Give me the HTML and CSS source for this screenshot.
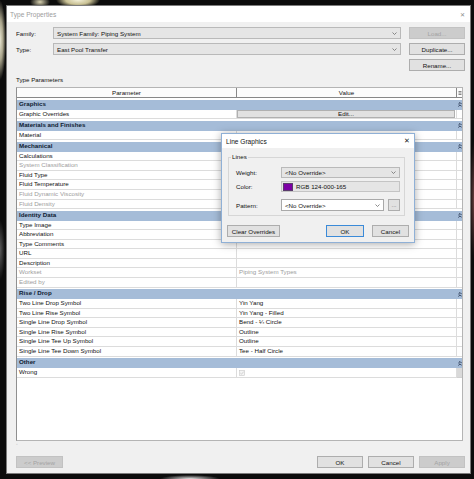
FILE: index.html
```html
<!DOCTYPE html>
<html>
<head>
<meta charset="utf-8">
<link rel="stylesheet" href="styles.css">
</head>
<body>
<div class="screen">
  <div class="window">
    <div class="titlebar"><span>Type Properties</span><span class="close">✕</span></div>
    <div class="content">
      <div class="top-grid">
        <span class="lbl">Family:</span>
        <div class="combo"><span>System Family: Piping System</span><svg class="chev" width="5" height="3" viewBox="0 0 5 3"><polyline points="0.5,0.5 2.5,2.5 4.5,0.5" fill="none" stroke="#6d6d6d" stroke-width="0.8"/></svg></div>
        <div class="btn side disabled">Load...</div>
        <span class="lbl">Type:</span>
        <div class="combo"><span>East Pool Transfer</span><svg class="chev" width="5" height="3" viewBox="0 0 5 3"><polyline points="0.5,0.5 2.5,2.5 4.5,0.5" fill="none" stroke="#6d6d6d" stroke-width="0.8"/></svg></div>
        <div class="btn side">Duplicate...</div>
        <span></span><span></span>
        <div class="btn side">Rename...</div>
      </div>
      <div class="section-label">Type Parameters</div>
      <div class="table">
        <div class="thead">
          <div class="th">Parameter</div>
          <div class="th">Value</div>
          <div class="th icon"><svg width="4" height="6" viewBox="0 0 4 6"><path d="M0.5 1.5h3M0.5 3h3M0.5 4.5h3" stroke="#555" stroke-width="0.7"/></svg></div>
        </div>
        <div class="tbody">
          <div class="row group first"><div class="gname">Graphics</div><div class="gicon"><svg width="4" height="5" viewBox="0 0 4 5"><path d="M0.4 2.1L2 0.5L3.6 2.1M0.4 4.4L2 2.8L3.6 4.4" fill="none" stroke="#1d2b45" stroke-width="0.9"/></svg></div></div>
          <div class="row"><div>Graphic Overrides</div><div class="val"><div class="editbtn">Edit...</div></div><div></div></div>

          <div class="row group"><div class="gname">Materials and Finishes</div><div class="gicon"><svg width="4" height="5" viewBox="0 0 4 5"><path d="M0.4 2.1L2 0.5L3.6 2.1M0.4 4.4L2 2.8L3.6 4.4" fill="none" stroke="#1d2b45" stroke-width="0.9"/></svg></div></div>
          <div class="row"><div>Material</div><div></div><div></div></div>

          <div class="row group"><div class="gname">Mechanical</div><div class="gicon"><svg width="4" height="5" viewBox="0 0 4 5"><path d="M0.4 2.1L2 0.5L3.6 2.1M0.4 4.4L2 2.8L3.6 4.4" fill="none" stroke="#1d2b45" stroke-width="0.9"/></svg></div></div>
          <div class="row"><div>Calculations</div><div></div><div></div></div>
          <div class="row ro"><div>System Classification</div><div></div><div></div></div>
          <div class="row"><div>Fluid Type</div><div></div><div></div></div>
          <div class="row"><div>Fluid Temperature</div><div></div><div></div></div>
          <div class="row ro"><div>Fluid Dynamic Viscosity</div><div></div><div></div></div>
          <div class="row ro"><div>Fluid Density</div><div></div><div></div></div>

          <div class="row group"><div class="gname">Identity Data</div><div class="gicon"><svg width="4" height="5" viewBox="0 0 4 5"><path d="M0.4 2.1L2 0.5L3.6 2.1M0.4 4.4L2 2.8L3.6 4.4" fill="none" stroke="#1d2b45" stroke-width="0.9"/></svg></div></div>
          <div class="row"><div>Type Image</div><div></div><div></div></div>
          <div class="row"><div>Abbreviation</div><div></div><div></div></div>
          <div class="row"><div>Type Comments</div><div></div><div></div></div>
          <div class="row"><div>URL</div><div></div><div></div></div>
          <div class="row"><div>Description</div><div></div><div></div></div>
          <div class="row ro"><div>Workset</div><div>Piping System Types</div><div></div></div>
          <div class="row ro"><div>Edited by</div><div></div><div></div></div>

          <div class="row group"><div class="gname">Rise / Drop</div><div class="gicon"><svg width="4" height="5" viewBox="0 0 4 5"><path d="M0.4 2.1L2 0.5L3.6 2.1M0.4 4.4L2 2.8L3.6 4.4" fill="none" stroke="#1d2b45" stroke-width="0.9"/></svg></div></div>
          <div class="row"><div>Two Line Drop Symbol</div><div>Yin Yang</div><div></div></div>
          <div class="row"><div>Two Line Rise Symbol</div><div>Yin Yang - Filled</div><div></div></div>
          <div class="row"><div>Single Line Drop Symbol</div><div>Bend - ¼ Circle</div><div></div></div>
          <div class="row"><div>Single Line Rise Symbol</div><div>Outline</div><div></div></div>
          <div class="row"><div>Single Line Tee Up Symbol</div><div>Outline</div><div></div></div>
          <div class="row"><div>Single Line Tee Down Symbol</div><div>Tee - Half Circle</div><div></div></div>

          <div class="row group"><div class="gname">Other</div><div class="gicon"><svg width="4" height="5" viewBox="0 0 4 5"><path d="M0.4 2.1L2 0.5L3.6 2.1M0.4 4.4L2 2.8L3.6 4.4" fill="none" stroke="#1d2b45" stroke-width="0.9"/></svg></div></div>
          <div class="row"><div>Wrong</div><div class="val"><svg class="check" width="6" height="6" viewBox="0 0 6 6"><rect x="0.5" y="0.5" width="5" height="5" fill="#f4f4f4" stroke="#c8c8c8" stroke-width="0.6"/><path d="M1.3 3L2.5 4.2L4.7 1.6" fill="none" stroke="#c4c4c4" stroke-width="0.7"/></svg></div><div class="scrollbox"></div></div>
        </div>
      </div>
      <div class="grip">◦</div>
      <div class="footer">
        <div class="btn disabled wide">&lt;&lt; Preview</div>
        <div class="spacer"></div>
        <div class="btn wide">OK</div>
        <div class="btn wide">Cancel</div>
        <div class="btn disabled wide">Apply</div>
      </div>
    </div>
  </div>

  <div class="dialog">
    <div class="dlg-title"><span>Line Graphics</span><span class="dlg-close">✕</span></div>
    <div class="dlg-body">
      <fieldset class="lines">
        <legend>Lines</legend>
        <div class="lg-grid">
          <span class="lbl r1">Weight:</span>
          <div class="combo r1"><span>&lt;No Override&gt;</span><svg class="chev" width="5" height="3" viewBox="0 0 5 3"><polyline points="0.5,0.5 2.5,2.5 4.5,0.5" fill="none" stroke="#6d6d6d" stroke-width="0.8"/></svg></div>
          <span class="lbl r2">Color:</span>
          <div class="field r2"><span class="swatch"></span><span>RGB 124-000-165</span></div>
          <span class="lbl r3">Pattern:</span>
          <div class="pattern r3">
            <div class="combo white"><span>&lt;No Override&gt;</span><svg class="chev" width="5" height="3" viewBox="0 0 5 3"><polyline points="0.5,0.5 2.5,2.5 4.5,0.5" fill="none" stroke="#6d6d6d" stroke-width="0.8"/></svg></div>
            <div class="btn dots">...</div>
          </div>
        </div>
      </fieldset>
      <div class="dlg-buttons">
        <div class="btn clear">Clear Overrides</div>
        <div class="spacer"></div>
        <div class="btn ok">OK</div>
        <div class="btn cancel">Cancel</div>
      </div>
    </div>
  </div>
</div>
</body>
</html>
```

FILE: styles.css
```css
* { box-sizing: border-box; }
html, body { margin: 0; padding: 0; }
body {
  width: 474px;
  height: 479px;
  overflow: hidden;
  font-family: "Liberation Sans", Arial, sans-serif;
  font-size: 6.2px;
  color: #111;
  background:
    radial-gradient(ellipse 22px 8px at 78px 0px, #f3f0d8 0%, #c9c194 55%, rgba(0,0,0,0) 100%),
    radial-gradient(ellipse 10px 6px at 40px 2px, #d8d2b0 0%, rgba(0,0,0,0) 100%),
    radial-gradient(ellipse 6px 40px at 0px 40px, #e9e6d2 0%, #a8a38a 50%, rgba(0,0,0,0) 100%),
    radial-gradient(ellipse 5px 30px at 0px 250px, #5a5a5a 0%, rgba(0,0,0,0) 100%),
    radial-gradient(ellipse 30px 4px at 190px 479px, #e8e8e8 0%, rgba(0,0,0,0) 100%),
    radial-gradient(ellipse 4px 60px at 474px 200px, #6a4040 0%, rgba(0,0,0,0) 100%),
    #0c0c0c;
}
.screen {
  position: relative;
  width: 474px;
  height: 479px;
  padding: 5px 3px 5px 6px;
}
.window {
  width: 465px;
  height: 469px;
  border: 1px solid #7c7c7c;
  background: #f0f0f0;
  display: flex;
  flex-direction: column;
}
.titlebar {
  height: 16px;
  flex: none;
  background: #fff;
  display: flex;
  align-items: center;
  justify-content: space-between;
  padding: 0 5px 0 3px;
  color: #9c9c9c;
  font-size: 6.6px;
}
.close { color: #8a8a8a; font-size: 6px; }
.content {
  flex: 1;
  padding: 5px 5px 5px 9px;
  display: flex;
  flex-direction: column;
}
.top-grid {
  display: grid;
  grid-template-columns: 37px 348px 64px;
  grid-template-rows: repeat(3, 12px);
  row-gap: 4px;
}
.btn.side { margin-left: 8px; }
.lbl { align-self: center; white-space: nowrap; }
.combo {
  border: 1px solid #b9b9b9;
  background: #e5e5e5;
  display: flex;
  align-items: center;
  justify-content: space-between;
  padding: 0 3px 0 3px;
  white-space: nowrap;
}
.combo.white { background: #fff; border-color: #a9a9a9; }
.chev { flex: none; }
.btn {
  border: 1px solid #adadad;
  background: #e1e1e1;
  display: flex;
  align-items: center;
  justify-content: center;
  white-space: nowrap;
}
.btn.disabled { background: #cccccc; border-color: #c2c2c2; color: #a3a3a3; }
.section-label {
  height: 12px;
  line-height: 12px;
  margin-top: 3px;
}
.table {
  margin-top: 1px;
  width: 447px;
  height: 354px;
  flex: none;
  background: #fff;
  border: 1px solid #b4b4b4;
  border-left-color: #8f8f8f;
  display: flex;
  flex-direction: column;
}
.thead {
  display: grid;
  grid-template-columns: 220px 220px 5px;
  height: 10px;
  flex: none;
}
.th {
  border-right: 1px solid #888;
  border-bottom: 1px solid #888;
  display: flex;
  align-items: center;
  justify-content: center;
  background: #fcfcfc;
}
.th.icon { border-right: none; }
.tbody { padding-top: 2px; }
.row {
  display: grid;
  grid-template-columns: 220px 220px 5px;
  height: 9.6px;
}
.row > div {
  border-bottom: 1px solid #dcdcdc;
  border-right: 1px solid #dcdcdc;
  padding-left: 2px;
  line-height: 8.6px;
  white-space: nowrap;
  overflow: hidden;
}
.row > div:last-child { border-right: none; }
.row.ro > div { color: #9d9d9d; }
.row.group {
  grid-template-columns: 440px 5px;
  background: #a5bcd8;
  margin-top: 1.8px;
}
.row.group.first { margin-top: 0; }
.row.group > div { border: none; }
.gname { font-weight: bold; color: #0e1a30; }
.gicon { display: flex; align-items: center; justify-content: center; padding-left: 0 !important; }
.row > .val { padding: 0.5px 1px 0 0; }
.editbtn {
  height: 8px;
  border: 1px solid #b0b0b0;
  background: #e1e1e1;
  display: flex;
  align-items: center;
  justify-content: center;
  line-height: 6px;
}
.check { display: block; margin: 1px 0 0 2px; }
.row > .scrollbox { background: #d9d9d9; border-bottom: 1px solid #d0d0d0; }
.grip { height: 15px; color: #b0b0b0; font-size: 5px; line-height: 6px; }
.footer {
  display: flex;
  height: 12px;
  gap: 5px;
}
.footer .btn.wide { width: 46px; }
.footer .btn.wide:first-child { width: 47px; }
.spacer { flex: 1; }

/* dialog */
.dialog {
  position: absolute;
  left: 221px;
  top: 133px;
  width: 194px;
  height: 110px;
  border: 1px solid #8fb0d6;
  background: #f0f0f0;
  box-shadow: 0 1px 8px rgba(0,0,0,0.35);
  display: flex;
  flex-direction: column;
}
.dlg-title {
  height: 14px;
  flex: none;
  background: #fff;
  display: flex;
  align-items: center;
  justify-content: space-between;
  padding: 0 4px 0 4px;
  font-size: 6.6px;
}
.dlg-close { font-size: 7px; color: #222; }
.dlg-body { padding: 5px 9px 0 6px; }
.lines {
  margin: 0;
  padding: 6px 4px 4px 7px;
  border: 1px solid #d6d6d6;
  min-width: 0;
}
.lines legend {
  padding: 0 1px;
  margin-left: -5px;
  line-height: 8px;
  font-size: 6.2px;
}
.lg-grid {
  display: grid;
  grid-template-columns: 45px 119px;
  grid-template-rows: auto auto auto;
  align-items: start;
}
.lg-grid .lbl { align-self: start; display: flex; align-items: center; }
.lg-grid .r1 { height: 11px; }
.lg-grid .r2 { height: 11px; margin-top: 3px; }
.lg-grid .r3 { height: 12px; margin-top: 7px; }
.field {
  border: 1px solid #c4c4c4;
  background: #e5e5e5;
  display: flex;
  align-items: center;
  padding-left: 1px;
  gap: 3px;
}
.swatch { width: 10px; height: 8px; background: rgb(124,0,165); border: 1px solid #5a3c6c; }
.pattern { display: flex; gap: 4px; }
.pattern .combo { flex: 1; }
.btn.dots { width: 12px; flex: none; color: #777; line-height: 4px; align-items: flex-end; padding-bottom: 3px; }
.dlg-buttons {
  display: flex;
  height: 12px;
  margin: 9px -4px 0 -1px;
}
.btn.clear { width: 53px; }
.btn.ok { width: 38px; border-color: #3a8ad8; margin-right: 8px; }
.btn.cancel { width: 37px; }
```
